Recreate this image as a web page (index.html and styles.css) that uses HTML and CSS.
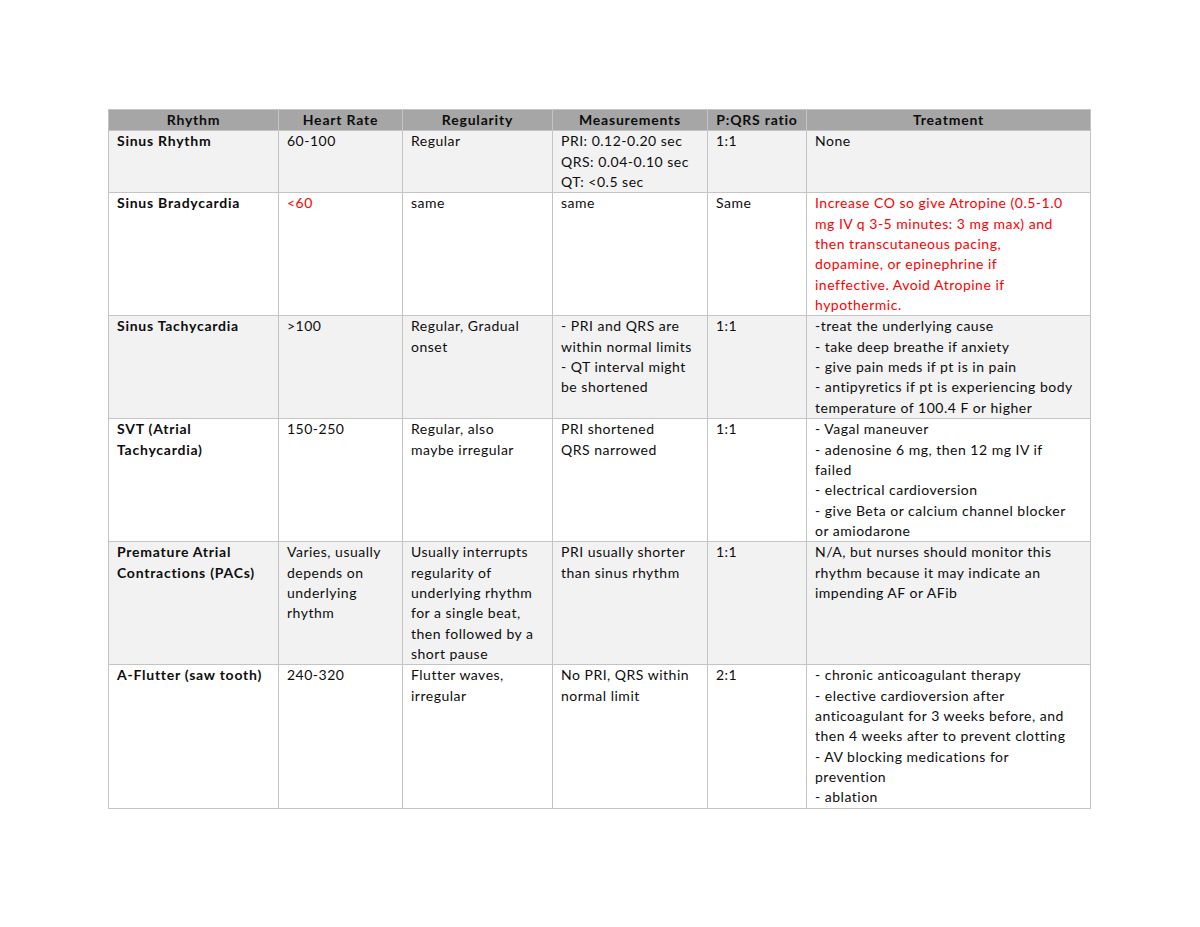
FILE: index.html
```html
<!DOCTYPE html>
<html lang="en">
<head>
<meta charset="utf-8">
<title>Cardiac Rhythms</title>
<link rel="stylesheet" href="styles.css">
</head>
<body>
<main class="page">
<table class="rhythms">
<colgroup>
<col class="c-rhythm"><col class="c-rate"><col class="c-reg"><col class="c-meas"><col class="c-ratio"><col class="c-treat">
</colgroup>
<thead>
<tr class="head">
<th>Rhythm</th><th>Heart Rate</th><th>Regularity</th><th>Measurements</th><th>P:QRS ratio</th><th>Treatment</th>
</tr>
</thead>
<tbody>
<tr class="shade">
<td class="name">Sinus Rhythm</td>
<td>60-100</td>
<td>Regular</td>
<td>PRI: 0.12-0.20 sec<br>QRS: 0.04-0.10 sec<br>QT: &lt;0.5 sec</td>
<td>1:1</td>
<td>None</td>
</tr>
<tr>
<td class="name">Sinus Bradycardia</td>
<td class="red">&lt;60</td>
<td>same</td>
<td>same</td>
<td>Same</td>
<td class="red">Increase CO so give Atropine (0.5-1.0<br>mg IV q 3-5 minutes: 3 mg max) and<br>then transcutaneous pacing,<br>dopamine, or epinephrine if<br>ineffective. Avoid Atropine if<br>hypothermic.</td>
</tr>
<tr class="shade">
<td class="name">Sinus Tachycardia</td>
<td>&gt;100</td>
<td>Regular, Gradual<br>onset</td>
<td>- PRI and QRS are<br>within normal limits<br>- QT interval might<br>be shortened</td>
<td>1:1</td>
<td>-treat the underlying cause<br>- take deep breathe if anxiety<br>- give pain meds if pt is in pain<br>- antipyretics if pt is experiencing body<br>temperature of 100.4 F or higher</td>
</tr>
<tr>
<td class="name">SVT (Atrial<br>Tachycardia)</td>
<td>150-250</td>
<td>Regular, also<br>maybe irregular</td>
<td>PRI shortened<br>QRS narrowed</td>
<td>1:1</td>
<td>- Vagal maneuver<br>- adenosine 6 mg, then 12 mg IV if<br>failed<br>- electrical cardioversion<br>- give Beta or calcium channel blocker<br>or amiodarone</td>
</tr>
<tr class="shade">
<td class="name">Premature Atrial<br>Contractions (PACs)</td>
<td>Varies, usually<br>depends on<br>underlying<br>rhythm</td>
<td>Usually interrupts<br>regularity of<br>underlying rhythm<br>for a single beat,<br>then followed by a<br>short pause</td>
<td>PRI usually shorter<br>than sinus rhythm</td>
<td>1:1</td>
<td>N/A, but nurses should monitor this<br>rhythm because it may indicate an<br>impending AF or AFib</td>
</tr>
<tr>
<td class="name">A-Flutter (saw tooth)</td>
<td>240-320</td>
<td>Flutter waves,<br>irregular</td>
<td>No PRI, QRS within<br>normal limit</td>
<td>2:1</td>
<td>- chronic anticoagulant therapy<br>- elective cardioversion after<br>anticoagulant for 3 weeks before, and<br>then 4 weeks after to prevent clotting<br>- AV blocking medications for<br>prevention<br>- ablation</td>
</tr>
</tbody>
</table>
</main>
</body>
</html>
```
FILE: styles.css
```css
html, body {
  margin: 0;
  padding: 0;
  background: #ffffff;
}

.page {
  padding: 109px 0 0 108px;
  font-family: "Lato", "Liberation Sans", sans-serif;
  font-size: 14px;
  letter-spacing: 0.5px;
  color: #0d0d0d;
}

.rhythms {
  border-collapse: collapse;
  table-layout: fixed;
  width: 982px;
}

.c-rhythm { width: 170px; }
.c-rate { width: 124px; }
.c-reg { width: 150px; }
.c-meas { width: 155px; }
.c-ratio { width: 99px; }
.c-treat { width: 284px; }

.rhythms th,
.rhythms td {
  border: 1px solid #c4c4c4;
  padding: 0 8px;
  line-height: 20.35px;
  vertical-align: top;
  text-align: left;
  white-space: nowrap;
  font-weight: 400;
}

.rhythms .head th {
  background: #a6a6a6;
  font-weight: 700;
  letter-spacing: 0.8px;
  text-align: center;
  color: #0d0d0d;
}

.rhythms .shade td {
  background: #f2f2f2;
}

.rhythms td.name {
  font-weight: 700;
  letter-spacing: 0.75px;
}

.rhythms td.red {
  color: #ff0000;
}
```
